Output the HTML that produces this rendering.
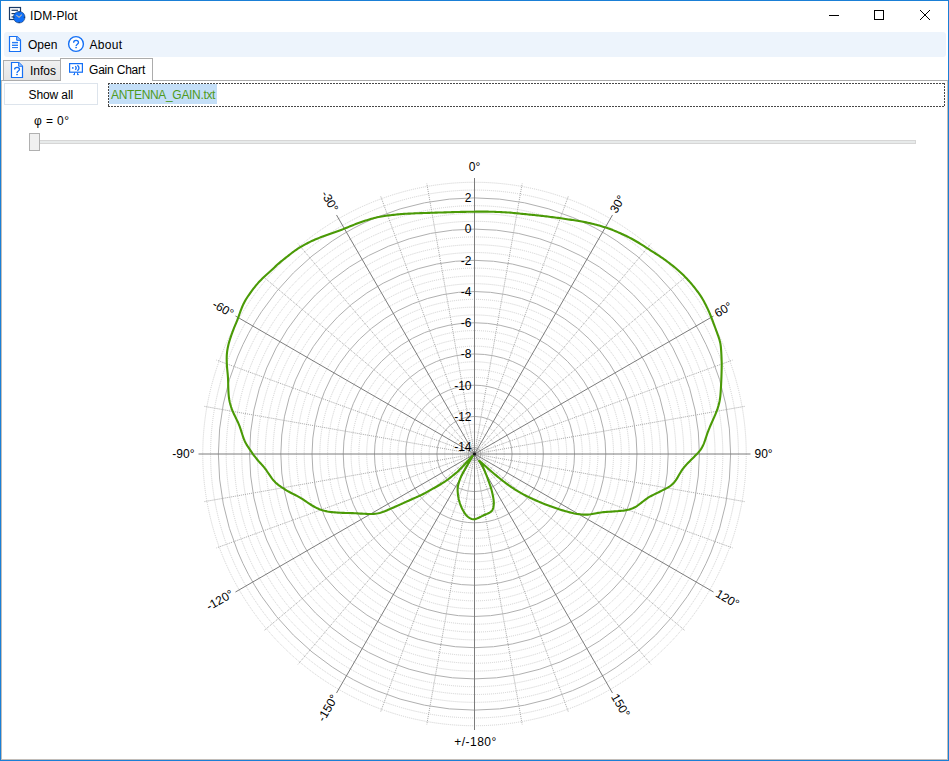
<!DOCTYPE html>
<html><head><meta charset="utf-8">
<style>
html,body{margin:0;padding:0;background:#fff;}
body{width:949px;height:761px;position:relative;overflow:hidden;font-family:"Liberation Sans",sans-serif;font-size:12px;color:#000;}
.abs{position:absolute;}
.t{position:absolute;white-space:nowrap;line-height:12px;font-size:12px;}
svg{position:absolute;left:0;top:0;}
.ml{font-family:"Liberation Sans",sans-serif;font-size:12px;fill:#000;}
.al{font-family:"Liberation Sans",sans-serif;font-size:12px;fill:#000;}
</style></head><body>
<!-- window border -->
<div class="abs" style="left:0;top:0;width:947px;height:759px;border:1px solid #1a7fd6;"></div>
<!-- title -->
<svg width="949" height="761" style="pointer-events:none">
  <!-- app icon -->
  <rect x="9.5" y="7.5" width="11" height="12" fill="#fff" stroke="#1b3a66" stroke-width="1.2"/>
  <line x1="11.5" y1="10.3" x2="18" y2="10.3" stroke="#1b3a66" stroke-width="1.2"/>
  <line x1="11.5" y1="13.6" x2="15" y2="13.6" stroke="#1b3a66" stroke-width="1.2"/>
  <line x1="11.5" y1="16.9" x2="14" y2="16.9" stroke="#1b3a66" stroke-width="1.2"/>
  <circle cx="19.2" cy="17.2" r="5.8" fill="#0f6ff8" stroke="#1b3a66" stroke-width="0.6"/>
  <polyline points="16.3,15.1 19.1,17.3 21.8,14.7" fill="none" stroke="#b4b4b4" stroke-width="1.1"/>
  <circle cx="19.2" cy="11.9" r="0.7" fill="#1b3a66"/><circle cx="24.4" cy="17.2" r="0.7" fill="#1b3a66"/><circle cx="19.2" cy="22.4" r="0.7" fill="#1b3a66"/><circle cx="14.0" cy="17.2" r="0.7" fill="#1b3a66"/>
  <!-- min/max/close -->
  <line x1="829" y1="15.5" x2="839" y2="15.5" stroke="#000" stroke-width="1"/>
  <rect x="874.5" y="10.5" width="9" height="9" fill="none" stroke="#000" stroke-width="1"/>
  <line x1="920" y1="10" x2="930" y2="20" stroke="#000" stroke-width="1"/>
  <line x1="930" y1="10" x2="920" y2="20" stroke="#000" stroke-width="1"/>
</svg>
<div class="t" style="left:30px;top:10px;letter-spacing:0.1px;">IDM-Plot</div>
<!-- menu -->
<div class="abs" style="left:4px;top:32px;width:942px;height:25px;background:#edf4fc;border-radius:3px;"></div>
<svg width="949" height="761">
  <path d="M9.5,36.5 H17 L20.5,40 V51.5 H9.5 Z" fill="#fff" stroke="#1570f5" stroke-width="1.2"/>
  <path d="M16.7,36.5 V40.3 H20.5" fill="#9cc4fb" stroke="#1570f5" stroke-width="1"/>
  <rect x="12" y="42.3" width="6" height="3" fill="#b9d5fb"/>
  <line x1="12" y1="42.4" x2="18" y2="42.4" stroke="#1570f5" stroke-width="1"/>
  <line x1="12" y1="45.4" x2="18" y2="45.4" stroke="#1570f5" stroke-width="1"/>
  <line x1="12" y1="47.6" x2="18" y2="47.6" stroke="#1570f5" stroke-width="1"/>
  <circle cx="76" cy="44" r="7.4" fill="#fff" stroke="#1570f5" stroke-width="1.4"/>
  <path d="M73.6,42.7 C73.6,39.7 78.5,39.7 78.5,42.4 C78.5,44.1 76.1,44.3 76.1,46" fill="none" stroke="#1570f5" stroke-width="1.3"/>
  <rect x="75.3" y="46.9" width="1.6" height="1.3" fill="#1570f5"/>
</svg>
<div class="t" style="left:28px;top:38.5px;">Open</div>
<div class="t" style="left:89.5px;top:38.5px;letter-spacing:0.3px;">About</div>
<!-- tabs -->
<div class="abs" style="left:1px;top:80px;width:945px;height:678px;border:1px solid #c2bdb8;border-top-color:#acacac;"></div>
<div class="abs" style="left:3px;top:60px;width:56px;height:19px;border:1px solid #acacac;border-bottom:none;background:linear-gradient(#f0f0f0,#e5e5e5);"></div>
<div class="abs" style="left:60px;top:58px;width:91px;height:22px;border:1px solid #acacac;border-bottom:none;background:#fff;"></div>
<svg width="949" height="761">
  <path d="M11.5,62.5 H18.8 L22.5,66.2 V77.5 H11.5 Z" fill="#fff" stroke="#1570f5" stroke-width="1.2"/>
  <path d="M18.6,62.6 V66.3 H22.4" fill="#9cc4fb" stroke="#1570f5" stroke-width="0.9"/>
  <path d="M14.6,69.6 C14.6,66.8 19.5,66.8 19.5,69.3 C19.5,71 17,71.1 17,72.9" fill="none" stroke="#1570f5" stroke-width="1.3"/>
  <rect x="16.2" y="73.9" width="1.6" height="1.3" fill="#1570f5"/>
  <rect x="69.6" y="63.6" width="12.8" height="8.6" fill="#fff" stroke="#1570f5" stroke-width="1.2"/>
  <circle cx="72.8" cy="67.9" r="0.9" fill="#1570f5"/>
  <path d="M75.2,66.2 Q77.3,67.9 75.2,69.7" fill="none" stroke="#1570f5" stroke-width="1.3"/>
  <path d="M77.4,65.2 Q80.6,67.9 77.4,70.7" fill="none" stroke="#1570f5" stroke-width="1.3"/>
  <path d="M74.5,72.5 V74.5 M77.6,72.5 V74.5 M73.3,74.6 H75 M77,74.6 H78.8" fill="none" stroke="#1570f5" stroke-width="1"/>
</svg>
<div class="t" style="left:30px;top:65px;">Infos</div>
<div class="t" style="left:89px;top:64px;letter-spacing:-0.2px;">Gain Chart</div>
<!-- show all button -->
<div class="abs" style="left:4px;top:83px;width:92px;height:20px;border:1px solid #dde4ec;background:#fff;"></div>
<div class="t" style="left:28.5px;top:89px;letter-spacing:-0.1px;">Show all</div>
<!-- file field -->
<svg width="949" height="761"><g stroke="#484848" stroke-width="1" stroke-dasharray="2 1" fill="none"><path d="M108,83.5 H945"/><path d="M108,106.5 H945"/><path d="M108.5,83 V107"/><path d="M944.5,83 V107"/></g></svg>
<div class="abs" style="left:109px;top:84px;width:108px;height:20px;background:#c4dff8;"></div>
<div class="t" style="left:111px;top:89px;color:#4f9a1c;letter-spacing:-0.33px;">ANTENNA_GAIN.txt</div>
<!-- phi label & slider -->
<div class="t" style="left:34px;top:115px;letter-spacing:0.4px;">φ = 0°</div>
<div class="abs" style="left:29px;top:140px;width:885px;height:2px;background:#e7eaea;border:1px solid #d6d6d6;"></div>
<div class="abs" style="left:29px;top:133px;width:9px;height:16px;background:#f0f0f0;border:1px solid #b0b0b0;"></div>
<svg width="949" height="761">
<circle cx="474.5" cy="454.0" r="14.16" fill="none" stroke="#d0d0d0" stroke-width="1" stroke-dasharray="1 1"/>
<circle cx="474.5" cy="454.0" r="21.97" fill="none" stroke="#d0d0d0" stroke-width="1" stroke-dasharray="1 1"/>
<circle cx="474.5" cy="454.0" r="29.77" fill="none" stroke="#d0d0d0" stroke-width="1" stroke-dasharray="1 1"/>
<circle cx="474.5" cy="454.0" r="45.38" fill="none" stroke="#d0d0d0" stroke-width="1" stroke-dasharray="1 1"/>
<circle cx="474.5" cy="454.0" r="53.19" fill="none" stroke="#d0d0d0" stroke-width="1" stroke-dasharray="1 1"/>
<circle cx="474.5" cy="454.0" r="60.99" fill="none" stroke="#d0d0d0" stroke-width="1" stroke-dasharray="1 1"/>
<circle cx="474.5" cy="454.0" r="76.60" fill="none" stroke="#d0d0d0" stroke-width="1" stroke-dasharray="1 1"/>
<circle cx="474.5" cy="454.0" r="84.41" fill="none" stroke="#d0d0d0" stroke-width="1" stroke-dasharray="1 1"/>
<circle cx="474.5" cy="454.0" r="92.22" fill="none" stroke="#d0d0d0" stroke-width="1" stroke-dasharray="1 1"/>
<circle cx="474.5" cy="454.0" r="107.82" fill="none" stroke="#d0d0d0" stroke-width="1" stroke-dasharray="1 1"/>
<circle cx="474.5" cy="454.0" r="115.63" fill="none" stroke="#d0d0d0" stroke-width="1" stroke-dasharray="1 1"/>
<circle cx="474.5" cy="454.0" r="123.44" fill="none" stroke="#d0d0d0" stroke-width="1" stroke-dasharray="1 1"/>
<circle cx="474.5" cy="454.0" r="139.05" fill="none" stroke="#d0d0d0" stroke-width="1" stroke-dasharray="1 1"/>
<circle cx="474.5" cy="454.0" r="146.85" fill="none" stroke="#d0d0d0" stroke-width="1" stroke-dasharray="1 1"/>
<circle cx="474.5" cy="454.0" r="154.65" fill="none" stroke="#d0d0d0" stroke-width="1" stroke-dasharray="1 1"/>
<circle cx="474.5" cy="454.0" r="170.26" fill="none" stroke="#d0d0d0" stroke-width="1" stroke-dasharray="1 1"/>
<circle cx="474.5" cy="454.0" r="178.07" fill="none" stroke="#d0d0d0" stroke-width="1" stroke-dasharray="1 1"/>
<circle cx="474.5" cy="454.0" r="185.88" fill="none" stroke="#d0d0d0" stroke-width="1" stroke-dasharray="1 1"/>
<circle cx="474.5" cy="454.0" r="201.49" fill="none" stroke="#d0d0d0" stroke-width="1" stroke-dasharray="1 1"/>
<circle cx="474.5" cy="454.0" r="209.29" fill="none" stroke="#d0d0d0" stroke-width="1" stroke-dasharray="1 1"/>
<circle cx="474.5" cy="454.0" r="217.09" fill="none" stroke="#d0d0d0" stroke-width="1" stroke-dasharray="1 1"/>
<circle cx="474.5" cy="454.0" r="232.70" fill="none" stroke="#d0d0d0" stroke-width="1" stroke-dasharray="1 1"/>
<circle cx="474.5" cy="454.0" r="240.51" fill="none" stroke="#d0d0d0" stroke-width="1" stroke-dasharray="1 1"/>
<circle cx="474.5" cy="454.0" r="248.31" fill="none" stroke="#d0d0d0" stroke-width="1" stroke-dasharray="1 1"/>
<circle cx="474.5" cy="454.0" r="263.93" fill="none" stroke="#d0d0d0" stroke-width="1" stroke-dasharray="1 1"/>
<circle cx="474.5" cy="454.0" r="271.73" fill="none" stroke="#d0d0d0" stroke-width="1" stroke-dasharray="1 1"/>
<line x1="474.5" y1="454.0" x2="522.17" y2="183.67" stroke="#a8a8a8" stroke-width="1" stroke-dasharray="1 1"/>
<line x1="474.5" y1="454.0" x2="568.38" y2="196.05" stroke="#a8a8a8" stroke-width="1" stroke-dasharray="1 1"/>
<line x1="474.5" y1="454.0" x2="650.95" y2="243.72" stroke="#a8a8a8" stroke-width="1" stroke-dasharray="1 1"/>
<line x1="474.5" y1="454.0" x2="684.78" y2="277.55" stroke="#a8a8a8" stroke-width="1" stroke-dasharray="1 1"/>
<line x1="474.5" y1="454.0" x2="732.45" y2="360.12" stroke="#a8a8a8" stroke-width="1" stroke-dasharray="1 1"/>
<line x1="474.5" y1="454.0" x2="744.83" y2="406.33" stroke="#a8a8a8" stroke-width="1" stroke-dasharray="1 1"/>
<line x1="474.5" y1="454.0" x2="744.83" y2="501.67" stroke="#a8a8a8" stroke-width="1" stroke-dasharray="1 1"/>
<line x1="474.5" y1="454.0" x2="732.45" y2="547.88" stroke="#a8a8a8" stroke-width="1" stroke-dasharray="1 1"/>
<line x1="474.5" y1="454.0" x2="684.78" y2="630.45" stroke="#a8a8a8" stroke-width="1" stroke-dasharray="1 1"/>
<line x1="474.5" y1="454.0" x2="650.95" y2="664.28" stroke="#a8a8a8" stroke-width="1" stroke-dasharray="1 1"/>
<line x1="474.5" y1="454.0" x2="568.38" y2="711.95" stroke="#a8a8a8" stroke-width="1" stroke-dasharray="1 1"/>
<line x1="474.5" y1="454.0" x2="522.17" y2="724.33" stroke="#a8a8a8" stroke-width="1" stroke-dasharray="1 1"/>
<line x1="474.5" y1="454.0" x2="426.83" y2="724.33" stroke="#a8a8a8" stroke-width="1" stroke-dasharray="1 1"/>
<line x1="474.5" y1="454.0" x2="380.62" y2="711.95" stroke="#a8a8a8" stroke-width="1" stroke-dasharray="1 1"/>
<line x1="474.5" y1="454.0" x2="298.05" y2="664.28" stroke="#a8a8a8" stroke-width="1" stroke-dasharray="1 1"/>
<line x1="474.5" y1="454.0" x2="264.22" y2="630.45" stroke="#a8a8a8" stroke-width="1" stroke-dasharray="1 1"/>
<line x1="474.5" y1="454.0" x2="216.55" y2="547.88" stroke="#a8a8a8" stroke-width="1" stroke-dasharray="1 1"/>
<line x1="474.5" y1="454.0" x2="204.17" y2="501.67" stroke="#a8a8a8" stroke-width="1" stroke-dasharray="1 1"/>
<line x1="474.5" y1="454.0" x2="204.17" y2="406.33" stroke="#a8a8a8" stroke-width="1" stroke-dasharray="1 1"/>
<line x1="474.5" y1="454.0" x2="216.55" y2="360.12" stroke="#a8a8a8" stroke-width="1" stroke-dasharray="1 1"/>
<line x1="474.5" y1="454.0" x2="264.22" y2="277.55" stroke="#a8a8a8" stroke-width="1" stroke-dasharray="1 1"/>
<line x1="474.5" y1="454.0" x2="298.05" y2="243.72" stroke="#a8a8a8" stroke-width="1" stroke-dasharray="1 1"/>
<line x1="474.5" y1="454.0" x2="380.62" y2="196.05" stroke="#a8a8a8" stroke-width="1" stroke-dasharray="1 1"/>
<line x1="474.5" y1="454.0" x2="426.83" y2="183.67" stroke="#a8a8a8" stroke-width="1" stroke-dasharray="1 1"/>
<circle cx="474.5" cy="454.0" r="6.36" fill="none" stroke="#b0b0b0" stroke-width="1"/>
<circle cx="474.5" cy="454.0" r="37.58" fill="none" stroke="#b0b0b0" stroke-width="1"/>
<circle cx="474.5" cy="454.0" r="68.80" fill="none" stroke="#b0b0b0" stroke-width="1"/>
<circle cx="474.5" cy="454.0" r="100.02" fill="none" stroke="#b0b0b0" stroke-width="1"/>
<circle cx="474.5" cy="454.0" r="131.24" fill="none" stroke="#b0b0b0" stroke-width="1"/>
<circle cx="474.5" cy="454.0" r="162.46" fill="none" stroke="#b0b0b0" stroke-width="1"/>
<circle cx="474.5" cy="454.0" r="193.68" fill="none" stroke="#b0b0b0" stroke-width="1"/>
<circle cx="474.5" cy="454.0" r="224.90" fill="none" stroke="#b0b0b0" stroke-width="1"/>
<circle cx="474.5" cy="454.0" r="256.12" fill="none" stroke="#b0b0b0" stroke-width="1"/>
<line x1="474.5" y1="454.0" x2="474.50" y2="178.00" stroke="#7c7c7c" stroke-width="1"/>
<line x1="474.5" y1="454.0" x2="612.50" y2="214.98" stroke="#7c7c7c" stroke-width="1"/>
<line x1="474.5" y1="454.0" x2="713.52" y2="316.00" stroke="#7c7c7c" stroke-width="1"/>
<line x1="474.5" y1="454.0" x2="750.50" y2="454.00" stroke="#7c7c7c" stroke-width="1"/>
<line x1="474.5" y1="454.0" x2="713.52" y2="592.00" stroke="#7c7c7c" stroke-width="1"/>
<line x1="474.5" y1="454.0" x2="612.50" y2="693.02" stroke="#7c7c7c" stroke-width="1"/>
<line x1="474.5" y1="454.0" x2="474.50" y2="730.00" stroke="#7c7c7c" stroke-width="1"/>
<line x1="474.5" y1="454.0" x2="336.50" y2="693.02" stroke="#7c7c7c" stroke-width="1"/>
<line x1="474.5" y1="454.0" x2="235.48" y2="592.00" stroke="#7c7c7c" stroke-width="1"/>
<line x1="474.5" y1="454.0" x2="198.50" y2="454.00" stroke="#7c7c7c" stroke-width="1"/>
<line x1="474.5" y1="454.0" x2="235.48" y2="316.00" stroke="#7c7c7c" stroke-width="1"/>
<line x1="474.5" y1="454.0" x2="336.50" y2="214.98" stroke="#7c7c7c" stroke-width="1"/>
<text x="471.5" y="450.9" text-anchor="end" class="ml">-14</text>
<text x="471.5" y="420.7" text-anchor="end" class="ml">-12</text>
<text x="471.5" y="389.5" text-anchor="end" class="ml">-10</text>
<text x="471.5" y="358.3" text-anchor="end" class="ml">-8</text>
<text x="471.5" y="327.1" text-anchor="end" class="ml">-6</text>
<text x="471.5" y="295.8" text-anchor="end" class="ml">-4</text>
<text x="471.5" y="264.6" text-anchor="end" class="ml">-2</text>
<text x="471.5" y="233.4" text-anchor="end" class="ml">0</text>
<text x="471.5" y="202.2" text-anchor="end" class="ml">2</text>
<text x="617.3" y="208.3" text-anchor="middle" class="al" transform="rotate(-60 617.3 204.0)">30°</text>
<text x="723.1" y="313.7" text-anchor="middle" class="al" transform="rotate(-30 723.1 309.4)">60°</text>
<text x="727.6" y="602.9" text-anchor="middle" class="al" transform="rotate(30 727.6 598.6)">120°</text>
<text x="620.8" y="709.7" text-anchor="middle" class="al" transform="rotate(60 620.8 705.4)">150°</text>
<text x="329.9" y="205.5" text-anchor="middle" class="al" transform="rotate(60 329.9 201.2)">-30°</text>
<text x="223.2" y="312.9" text-anchor="middle" class="al" transform="rotate(30 223.2 308.6)">-60°</text>
<text x="219.7" y="604.1" text-anchor="middle" class="al" transform="rotate(-30 219.7 599.8)">-120°</text>
<text x="327.6" y="712.2" text-anchor="middle" class="al" transform="rotate(-60 327.6 707.9)">-150°</text>
<text x="474.5" y="171" text-anchor="middle" class="al">0°</text>
<text x="475.5" y="745.8" text-anchor="middle" class="al" letter-spacing="0.5">+/-180°</text>
<text x="754.5" y="458" text-anchor="start" class="al">90°</text>
<text x="194.5" y="458" text-anchor="end" class="al">-90°</text>
<path d="M473.00,455.40 L471.98,456.50 L470.96,457.60 L469.93,458.70 L468.91,459.79 L467.89,460.89 L466.87,461.99 L465.84,463.09 L464.82,464.18 L463.79,465.28 L462.77,466.37 L461.73,467.46 L460.69,468.54 L459.64,469.60 L458.56,470.65 L457.47,471.67 L456.35,472.67 L455.21,473.65 L454.06,474.61 L452.90,475.56 L451.74,476.50 L450.56,477.43 L449.37,478.35 L448.17,479.25 L446.96,480.13 L445.73,480.99 L444.48,481.83 L443.23,482.65 L441.97,483.45 L440.69,484.24 L439.40,485.02 L438.11,485.77 L436.81,486.52 L435.50,487.25 L434.18,487.97 L432.86,488.69 L431.55,489.41 L430.24,490.13 L428.93,490.86 L427.62,491.60 L426.31,492.33 L425.00,493.06 L423.67,493.77 L422.34,494.46 L421.00,495.12 L419.64,495.76 L418.28,496.38 L416.91,497.00 L415.54,497.60 L414.17,498.21 L412.79,498.82 L411.42,499.43 L410.06,500.05 L408.69,500.67 L407.32,501.28 L405.96,501.90 L404.59,502.52 L403.22,503.14 L401.86,503.76 L400.49,504.38 L399.12,505.00 L397.75,505.61 L396.38,506.22 L395.01,506.83 L393.64,507.43 L392.26,508.03 L390.89,508.63 L389.51,509.23 L388.13,509.83 L386.76,510.42 L385.38,511.00 L383.98,511.55 L382.58,512.06 L381.15,512.51 L379.71,512.90 L378.25,513.23 L376.78,513.51 L375.30,513.72 L373.81,513.88 L372.32,513.96 L370.83,514.00 L369.33,513.98 L367.83,513.94 L366.33,513.88 L364.83,513.81 L363.34,513.74 L361.84,513.66 L360.34,513.58 L358.84,513.49 L357.34,513.40 L355.85,513.31 L354.35,513.23 L352.85,513.16 L351.35,513.10 L349.85,513.05 L348.35,513.01 L346.85,512.97 L345.35,512.93 L343.85,512.89 L342.35,512.84 L340.85,512.79 L339.35,512.72 L337.86,512.64 L336.36,512.54 L334.87,512.42 L333.37,512.28 L331.88,512.11 L330.40,511.92 L328.91,511.69 L327.44,511.43 L325.97,511.12 L324.51,510.78 L323.07,510.40 L321.64,509.96 L320.22,509.47 L318.83,508.93 L317.45,508.34 L316.10,507.69 L314.77,507.01 L313.46,506.28 L312.17,505.53 L310.89,504.74 L309.63,503.93 L308.38,503.10 L307.14,502.25 L305.91,501.40 L304.67,500.56 L303.42,499.73 L302.16,498.91 L300.89,498.12 L299.60,497.35 L298.30,496.60 L296.98,495.89 L295.65,495.20 L294.31,494.53 L292.97,493.86 L291.63,493.19 L290.30,492.50 L288.98,491.78 L287.68,491.04 L286.39,490.28 L285.11,489.49 L283.85,488.68 L282.59,487.86 L281.35,487.03 L280.11,486.17 L278.90,485.30 L277.71,484.38 L276.57,483.43 L275.47,482.42 L274.42,481.35 L273.42,480.24 L272.47,479.09 L271.56,477.90 L270.68,476.68 L269.83,475.45 L268.99,474.21 L268.17,472.96 L267.34,471.71 L266.49,470.47 L265.62,469.26 L264.71,468.07 L263.75,466.91 L262.77,465.78 L261.77,464.67 L260.76,463.56 L259.75,462.45 L258.76,461.33 L257.77,460.19 L256.81,459.05 L255.86,457.89 L254.93,456.71 L254.02,455.52 L253.13,454.31 L252.27,453.08 L251.43,451.84 L250.59,450.60 L249.75,449.36 L248.90,448.12 L248.06,446.88 L247.24,445.63 L246.46,444.36 L245.73,443.05 L245.06,441.72 L244.45,440.35 L243.88,438.97 L243.36,437.56 L242.86,436.15 L242.38,434.73 L241.92,433.30 L241.47,431.87 L241.02,430.44 L240.55,429.01 L240.07,427.59 L239.56,426.18 L239.02,424.79 L238.44,423.40 L237.83,422.04 L237.18,420.68 L236.53,419.34 L235.86,417.99 L235.20,416.65 L234.55,415.29 L233.91,413.94 L233.29,412.57 L232.69,411.20 L232.13,409.81 L231.60,408.41 L231.11,406.99 L230.67,405.56 L230.26,404.12 L229.90,402.67 L229.57,401.20 L229.29,399.73 L229.06,398.25 L228.86,396.77 L228.70,395.28 L228.58,393.78 L228.48,392.29 L228.40,390.79 L228.34,389.29 L228.29,387.79 L228.25,386.29 L228.21,384.79 L228.17,383.29 L228.13,381.79 L228.08,380.29 L228.02,378.79 L227.94,377.30 L227.84,375.80 L227.72,374.31 L227.58,372.81 L227.43,371.32 L227.28,369.83 L227.14,368.34 L227.02,366.84 L226.92,365.34 L226.84,363.85 L226.77,362.35 L226.73,360.85 L226.70,359.35 L226.71,357.85 L226.74,356.35 L226.82,354.86 L226.94,353.36 L227.10,351.87 L227.30,350.39 L227.55,348.91 L227.82,347.44 L228.14,345.97 L228.48,344.51 L228.86,343.06 L229.27,341.62 L229.70,340.19 L230.16,338.76 L230.63,337.33 L231.11,335.91 L231.61,334.50 L232.11,333.08 L232.62,331.67 L233.15,330.27 L233.69,328.87 L234.24,327.48 L234.82,326.09 L235.40,324.71 L235.99,323.33 L236.56,321.94 L237.12,320.55 L237.65,319.15 L238.17,317.74 L238.67,316.33 L239.17,314.92 L239.67,313.50 L240.18,312.09 L240.69,310.68 L241.22,309.28 L241.77,307.88 L242.34,306.49 L242.94,305.12 L243.58,303.77 L244.26,302.43 L244.97,301.11 L245.72,299.82 L246.51,298.54 L247.31,297.28 L248.14,296.03 L248.99,294.79 L249.84,293.56 L250.71,292.33 L251.60,291.12 L252.49,289.92 L253.40,288.72 L254.32,287.54 L255.25,286.36 L256.20,285.20 L257.17,284.06 L258.16,282.93 L259.17,281.82 L260.20,280.74 L261.25,279.67 L262.32,278.61 L263.40,277.57 L264.49,276.54 L265.59,275.52 L266.70,274.51 L267.81,273.51 L268.93,272.50 L270.04,271.50 L271.15,270.49 L272.25,269.46 L273.34,268.43 L274.42,267.40 L275.51,266.37 L276.61,265.35 L277.72,264.34 L278.85,263.35 L279.99,262.38 L281.14,261.42 L282.31,260.47 L283.48,259.54 L284.65,258.60 L285.83,257.67 L287.00,256.74 L288.18,255.81 L289.36,254.88 L290.54,253.96 L291.73,253.04 L292.92,252.13 L294.12,251.23 L295.34,250.36 L296.58,249.51 L297.83,248.68 L299.10,247.89 L300.38,247.11 L301.68,246.35 L302.98,245.61 L304.29,244.88 L305.61,244.16 L306.93,243.46 L308.26,242.77 L309.60,242.09 L310.95,241.43 L312.30,240.79 L313.67,240.17 L315.04,239.56 L316.42,238.98 L317.81,238.42 L319.21,237.86 L320.61,237.32 L322.01,236.78 L323.41,236.25 L324.81,235.72 L326.22,235.20 L327.63,234.68 L329.04,234.17 L330.46,233.68 L331.87,233.19 L333.29,232.70 L334.72,232.23 L336.14,231.74 L337.55,231.25 L338.97,230.75 L340.37,230.23 L341.77,229.69 L343.17,229.14 L344.56,228.57 L345.95,228.01 L347.34,227.44 L348.72,226.87 L350.11,226.31 L351.50,225.74 L352.90,225.18 L354.29,224.63 L355.69,224.09 L357.09,223.56 L358.50,223.04 L359.92,222.54 L361.33,222.04 L362.75,221.56 L364.17,221.08 L365.60,220.61 L367.02,220.14 L368.45,219.69 L369.89,219.24 L371.32,218.82 L372.77,218.41 L374.22,218.02 L375.67,217.66 L377.13,217.33 L378.60,217.02 L380.07,216.73 L381.55,216.46 L383.03,216.21 L384.51,215.99 L385.99,215.78 L387.48,215.58 L388.97,215.40 L390.46,215.21 L391.95,215.03 L393.44,214.84 L394.93,214.67 L396.42,214.50 L397.91,214.34 L399.40,214.21 L400.90,214.09 L402.40,213.98 L403.89,213.89 L405.39,213.81 L406.89,213.73 L408.39,213.65 L409.89,213.58 L411.38,213.50 L412.88,213.43 L414.38,213.37 L415.88,213.31 L417.38,213.25 L418.88,213.19 L420.38,213.14 L421.88,213.08 L423.38,213.03 L424.88,212.98 L426.38,212.93 L427.88,212.87 L429.38,212.83 L430.88,212.78 L432.37,212.73 L433.87,212.68 L435.37,212.64 L436.87,212.60 L438.37,212.56 L439.87,212.53 L441.37,212.49 L442.87,212.45 L444.37,212.40 L445.87,212.36 L447.37,212.31 L448.87,212.26 L450.37,212.20 L451.87,212.15 L453.37,212.10 L454.87,212.05 L456.37,212.01 L457.87,211.98 L459.37,211.94 L460.87,211.91 L462.37,211.89 L463.87,211.86 L465.37,211.84 L466.87,211.81 L468.37,211.79 L469.87,211.76 L471.37,211.73 L472.87,211.70 L474.37,211.68 L475.87,211.65 L477.37,211.63 L478.87,211.62 L480.37,211.61 L481.87,211.60 L483.37,211.61 L484.87,211.61 L486.37,211.63 L487.87,211.65 L489.37,211.68 L490.87,211.71 L492.37,211.75 L493.87,211.80 L495.37,211.86 L496.87,211.93 L498.37,211.99 L499.87,212.06 L501.37,212.13 L502.87,212.21 L504.36,212.28 L505.86,212.36 L507.36,212.45 L508.86,212.55 L510.35,212.67 L511.85,212.80 L513.34,212.95 L514.83,213.10 L516.32,213.26 L517.82,213.41 L519.31,213.57 L520.80,213.72 L522.29,213.86 L523.79,214.01 L525.28,214.15 L526.77,214.29 L528.27,214.44 L529.76,214.58 L531.25,214.73 L532.75,214.89 L534.24,215.04 L535.73,215.20 L537.22,215.36 L538.71,215.53 L540.20,215.69 L541.70,215.86 L543.19,216.03 L544.68,216.21 L546.17,216.38 L547.66,216.56 L549.14,216.74 L550.63,216.93 L552.12,217.12 L553.61,217.31 L555.10,217.50 L556.59,217.70 L558.07,217.91 L559.56,218.12 L561.04,218.33 L562.53,218.55 L564.01,218.77 L565.49,218.99 L566.98,219.21 L568.46,219.42 L569.95,219.64 L571.43,219.86 L572.92,220.08 L574.40,220.30 L575.88,220.53 L577.36,220.77 L578.84,221.02 L580.32,221.27 L581.80,221.54 L583.27,221.81 L584.75,222.10 L586.22,222.40 L587.68,222.71 L589.15,223.03 L590.61,223.36 L592.07,223.71 L593.53,224.06 L594.99,224.42 L596.44,224.79 L597.89,225.18 L599.33,225.58 L600.77,226.00 L602.21,226.43 L603.64,226.88 L605.07,227.33 L606.50,227.80 L607.92,228.28 L609.33,228.78 L610.74,229.30 L612.14,229.84 L613.54,230.39 L614.93,230.95 L616.31,231.53 L617.69,232.11 L619.07,232.71 L620.44,233.31 L621.81,233.93 L623.18,234.55 L624.54,235.18 L625.89,235.82 L627.24,236.48 L628.58,237.15 L629.92,237.84 L631.24,238.54 L632.56,239.25 L633.87,239.99 L635.17,240.73 L636.47,241.49 L637.76,242.25 L639.04,243.02 L640.33,243.81 L641.60,244.60 L642.87,245.40 L644.14,246.20 L645.40,247.02 L646.65,247.83 L647.91,248.65 L649.17,249.47 L650.43,250.29 L651.69,251.10 L652.95,251.90 L654.22,252.71 L655.49,253.51 L656.76,254.31 L658.02,255.12 L659.27,255.95 L660.52,256.78 L661.76,257.63 L662.99,258.48 L664.22,259.35 L665.44,260.22 L666.65,261.10 L667.86,261.99 L669.06,262.89 L670.25,263.80 L671.43,264.73 L672.61,265.66 L673.78,266.60 L674.94,267.55 L676.09,268.51 L677.23,269.48 L678.36,270.47 L679.48,271.47 L680.59,272.48 L681.68,273.51 L682.76,274.55 L683.83,275.60 L684.88,276.67 L685.93,277.75 L686.96,278.83 L687.98,279.93 L688.99,281.04 L689.99,282.16 L690.98,283.29 L691.95,284.43 L692.91,285.59 L693.85,286.75 L694.79,287.92 L695.71,289.11 L696.62,290.30 L697.51,291.50 L698.40,292.72 L699.26,293.94 L700.12,295.17 L700.95,296.42 L701.75,297.68 L702.54,298.96 L703.29,300.26 L704.02,301.57 L704.72,302.90 L705.41,304.23 L706.08,305.57 L706.74,306.92 L707.39,308.27 L708.03,309.63 L708.65,310.99 L709.26,312.36 L709.85,313.74 L710.42,315.13 L710.98,316.52 L711.53,317.92 L712.07,319.32 L712.60,320.72 L713.12,322.12 L713.65,323.53 L714.16,324.94 L714.68,326.35 L715.20,327.76 L715.72,329.16 L716.23,330.57 L716.75,331.98 L717.27,333.39 L717.79,334.80 L718.29,336.21 L718.77,337.63 L719.23,339.05 L719.66,340.49 L720.03,341.94 L720.35,343.40 L720.60,344.87 L720.80,346.35 L720.95,347.84 L721.07,349.34 L721.18,350.84 L721.27,352.33 L721.35,353.83 L721.42,355.33 L721.49,356.83 L721.55,358.33 L721.61,359.83 L721.65,361.33 L721.69,362.83 L721.70,364.33 L721.71,365.83 L721.69,367.33 L721.67,368.83 L721.63,370.32 L721.59,371.82 L721.55,373.32 L721.50,374.82 L721.45,376.32 L721.40,377.82 L721.34,379.32 L721.28,380.82 L721.21,382.32 L721.14,383.82 L721.06,385.32 L720.98,386.82 L720.89,388.31 L720.80,389.81 L720.70,391.31 L720.60,392.80 L720.48,394.30 L720.35,395.79 L720.18,397.28 L719.97,398.77 L719.73,400.24 L719.44,401.71 L719.11,403.17 L718.75,404.63 L718.35,406.07 L717.91,407.51 L717.45,408.93 L716.95,410.34 L716.42,411.75 L715.86,413.14 L715.29,414.53 L714.71,415.91 L714.12,417.29 L713.52,418.66 L712.91,420.04 L712.30,421.41 L711.69,422.78 L711.08,424.15 L710.48,425.52 L709.89,426.90 L709.32,428.29 L708.76,429.68 L708.22,431.08 L707.69,432.48 L707.18,433.89 L706.69,435.31 L706.22,436.73 L705.76,438.16 L705.30,439.59 L704.81,441.01 L704.30,442.41 L703.74,443.80 L703.14,445.17 L702.48,446.51 L701.76,447.82 L700.97,449.08 L700.11,450.30 L699.19,451.47 L698.21,452.61 L697.20,453.71 L696.16,454.79 L695.11,455.86 L694.06,456.93 L693.00,457.99 L691.93,459.05 L690.86,460.10 L689.80,461.16 L688.74,462.22 L687.69,463.29 L686.66,464.38 L685.65,465.49 L684.68,466.63 L683.73,467.79 L682.83,468.98 L681.95,470.20 L681.12,471.44 L680.33,472.71 L679.57,474.00 L678.83,475.31 L678.10,476.61 L677.34,477.91 L676.55,479.17 L675.70,480.41 L674.80,481.60 L673.84,482.74 L672.82,483.81 L671.72,484.82 L670.56,485.74 L669.34,486.59 L668.07,487.38 L666.77,488.11 L665.44,488.81 L664.11,489.50 L662.77,490.18 L661.43,490.85 L660.09,491.52 L658.75,492.19 L657.40,492.85 L656.05,493.50 L654.70,494.16 L653.35,494.82 L652.02,495.50 L650.69,496.20 L649.39,496.94 L648.12,497.73 L646.88,498.56 L645.66,499.43 L644.46,500.33 L643.27,501.24 L642.09,502.16 L640.91,503.09 L639.72,504.00 L638.52,504.90 L637.30,505.76 L636.04,506.57 L634.75,507.30 L633.41,507.96 L632.04,508.53 L630.63,509.03 L629.20,509.46 L627.75,509.83 L626.29,510.13 L624.81,510.38 L623.33,510.59 L621.84,510.76 L620.35,510.91 L618.85,511.05 L617.36,511.18 L615.86,511.29 L614.37,511.40 L612.87,511.50 L611.37,511.59 L609.87,511.68 L608.38,511.78 L606.88,511.88 L605.39,512.00 L603.89,512.13 L602.40,512.29 L600.91,512.47 L599.43,512.68 L597.94,512.91 L596.47,513.17 L595.00,513.45 L593.53,513.74 L592.06,514.03 L590.58,514.29 L589.10,514.48 L587.62,514.61 L586.12,514.67 L584.63,514.65 L583.13,514.59 L581.64,514.48 L580.15,514.33 L578.66,514.15 L577.18,513.94 L575.70,513.69 L574.23,513.41 L572.76,513.09 L571.30,512.75 L569.85,512.38 L568.40,512.00 L566.95,511.60 L565.51,511.20 L564.06,510.79 L562.62,510.37 L561.19,509.94 L559.75,509.50 L558.33,509.04 L556.90,508.56 L555.48,508.07 L554.07,507.57 L552.66,507.07 L551.25,506.56 L549.84,506.04 L548.43,505.52 L547.03,504.99 L545.63,504.45 L544.23,503.91 L542.84,503.35 L541.45,502.79 L540.06,502.22 L538.68,501.63 L537.30,501.04 L535.93,500.44 L534.56,499.82 L533.19,499.20 L531.83,498.57 L530.47,497.93 L529.12,497.28 L527.77,496.63 L526.43,495.96 L525.09,495.28 L523.76,494.59 L522.44,493.88 L521.12,493.16 L519.82,492.42 L518.52,491.66 L517.24,490.89 L515.96,490.10 L514.69,489.30 L513.43,488.49 L512.18,487.66 L510.94,486.82 L509.71,485.96 L508.48,485.10 L507.26,484.22 L506.06,483.33 L504.86,482.43 L503.66,481.52 L502.48,480.60 L501.30,479.67 L500.13,478.73 L498.97,477.78 L497.81,476.83 L496.65,475.88 L495.49,474.92 L494.34,473.96 L493.19,473.00 L492.05,472.03 L490.91,471.05 L489.77,470.07 L488.64,469.09 L487.52,468.09 L486.40,467.09 L485.28,466.09 L484.17,465.09 L483.05,464.08 L481.93,463.09 L480.80,462.11 L479.65,461.15 L478.50,460.20 M478.50,460.20 L479.49,461.33 L480.44,462.49 L481.31,463.71 L482.06,465.01 L482.72,466.36 L483.34,467.72 L483.94,469.10 L484.52,470.49 L485.09,471.88 L485.65,473.27 L486.20,474.67 L486.74,476.07 L487.26,477.48 L487.78,478.89 L488.29,480.30 L488.81,481.71 L489.33,483.12 L489.83,484.54 L490.32,485.96 L490.78,487.39 L491.22,488.82 L491.62,490.27 L492.00,491.73 L492.35,493.18 L492.68,494.65 L492.98,496.12 L493.24,497.60 L493.48,499.08 L493.67,500.57 L493.79,502.07 L493.81,503.57 L493.71,505.07 L493.52,506.55 L493.20,508.02 L492.71,509.43 L491.96,510.70 L490.91,511.74 L489.66,512.55 L488.34,513.26 L486.98,513.89 L485.59,514.45 L484.20,515.03 L482.86,515.69 L481.52,516.39 L480.18,517.05 L478.82,517.70 L477.46,518.32 L476.06,518.87 L474.61,519.22 L473.13,519.26 L471.68,518.97 L470.30,518.40 L469.01,517.65 L467.81,516.75 L466.73,515.71 L465.76,514.58 L464.87,513.37 L464.04,512.11 L463.27,510.82 L462.55,509.51 L461.88,508.16 L461.26,506.79 L460.70,505.40 L460.18,503.99 L459.71,502.57 L459.28,501.13 L458.90,499.68 L458.56,498.21 L458.28,496.74 L458.05,495.25 L457.87,493.76 L457.73,492.27 L457.64,490.77 L457.61,489.27 L457.70,487.77 L457.92,486.29 L458.23,484.82 L458.61,483.37 L459.05,481.93 L459.52,480.51 L460.04,479.10 L460.60,477.70 L461.19,476.32 L461.83,474.96 L462.51,473.62 L463.22,472.30 L463.95,470.99 L464.68,469.68 L465.43,468.37 L466.17,467.07 L466.93,465.77 L467.68,464.47 L468.44,463.17 L469.20,461.88 L469.96,460.58 L470.72,459.29 L471.48,457.99 L472.24,456.70 L473.00,455.40" fill="none" stroke="#4a9a06" stroke-width="2.1" stroke-linejoin="round"/>
<circle cx="474.5" cy="454.0" r="1.6" fill="#111"/>
</svg>
</body></html>
